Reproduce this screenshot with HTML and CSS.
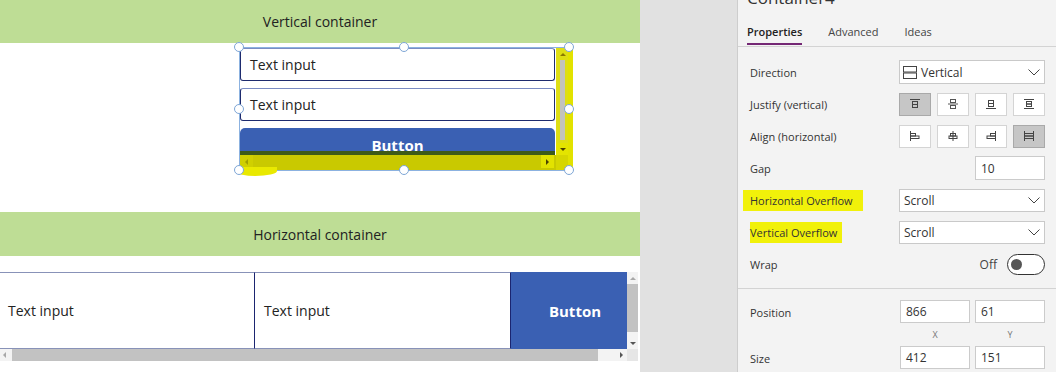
FILE: index.html
```html
<!DOCTYPE html>
<html>
<head>
<meta charset="utf-8">
<link rel="stylesheet" href="styles.css">
</head>
<body>
<div class="app">
  <div class="canvas">
    <div class="band band-top">Vertical container</div>
    <div class="vzone">
      <div class="vcont">
        <div class="vcont-content">
          <div class="vin">Text input</div>
          <div class="vin">Text input</div>
          <div class="vbtn">Button</div>
        </div>
        <div class="vscroll">
          <span class="tri tri-up c-olive"></span>
          <span class="vthumb"></span>
          <span class="vdown"><span class="tri tri-down c-dark"></span></span>
        </div>
        <div class="hscroll">
          <span class="hleft"><span class="tri tri-left c-light"></span></span>
          <span class="hright"><span class="tri tri-right c-dark"></span></span>
        </div>
        <div class="vcorner"></div>
        <span class="hl-right"></span>
        <span class="hl-blob"></span>
        <span class="hd" style="left:-1px;top:-1px"></span>
        <span class="hd" style="left:164px;top:-1px"></span>
        <span class="hd" style="left:329px;top:-1px"></span>
        <span class="hd" style="left:-1px;top:61px"></span>
        <span class="hd" style="left:329px;top:61px"></span>
        <span class="hd" style="left:-1px;top:122px"></span>
        <span class="hd" style="left:164px;top:122px"></span>
        <span class="hd" style="left:329px;top:122px"></span>
      </div>
    </div>
    <div class="band band-mid">Horizontal container</div>
    <div class="hzone">
      <div class="hcont">
        <div class="hcontent">
          <div class="hin hin1">Text input</div>
          <div class="hin hin2">Text input</div>
          <div class="hbtn">Button</div>
        </div>
        <div class="hvs">
          <span class="tri tri-up c-gray"></span>
          <span class="hvthumb"></span>
          <span class="tri tri-down c-mid"></span>
        </div>
        <div class="hhs">
          <span class="tri tri-left c-gray"></span>
          <span class="hhthumb"></span>
          <span class="tri tri-right c-mid"></span>
        </div>
        <div class="hcorner"></div>
      </div>
    </div>
  </div>
  <div class="gutter"></div>
  <div class="panel">
    <div class="ptitle">Container4</div>
    <div class="tabs">
      <span class="tab active">Properties</span>
      <span class="tab">Advanced</span>
      <span class="tab">Ideas</span>
    </div>
    <div class="props">
      <div class="row">
        <span class="lbl">Direction</span>
        <div class="dd">
          <svg class="dir-ic" width="14" height="13" viewBox="0 0 14 13"><rect x="0.5" y="0.5" width="13" height="5.5" fill="none" stroke="#444"/><rect x="0.5" y="7" width="13" height="5.5" fill="none" stroke="#444"/></svg>
          <span>Vertical</span>
          <svg class="chev" width="12" height="7" viewBox="0 0 12 7"><polyline points="0.5,0.5 6,6 11.5,0.5" fill="none" stroke="#444"/></svg>
        </div>
      </div>
      <div class="row">
        <span class="lbl">Justify (vertical)</span>
        <div class="seg">
          <span class="sb sel"><svg width="12" height="12" viewBox="0 0 12 12"><line x1="1" y1="1.5" x2="11" y2="1.5" stroke="#444"/><rect x="3.5" y="3.5" width="5" height="3" fill="none" stroke="#444"/><rect x="3.5" y="6.5" width="5" height="3" fill="none" stroke="#444"/></svg></span>
          <span class="sb"><svg width="12" height="12" viewBox="0 0 12 12"><rect x="3.5" y="1.5" width="5" height="3" fill="none" stroke="#555"/><line x1="1" y1="6" x2="11" y2="6" stroke="#555"/><rect x="3.5" y="7.5" width="5" height="3" fill="none" stroke="#555"/></svg></span>
          <span class="sb"><svg width="12" height="12" viewBox="0 0 12 12"><rect x="3.5" y="2.5" width="5" height="3" fill="none" stroke="#444"/><rect x="3.5" y="5.5" width="5" height="3" fill="none" stroke="#444"/><line x1="1" y1="10.5" x2="11" y2="10.5" stroke="#444"/></svg></span>
          <span class="sb"><svg width="12" height="12" viewBox="0 0 12 12"><line x1="1" y1="1.5" x2="11" y2="1.5" stroke="#444"/><rect x="3.5" y="3.5" width="5" height="2.5" fill="none" stroke="#444"/><rect x="3.5" y="6" width="5" height="2.5" fill="none" stroke="#444"/><line x1="1" y1="10.5" x2="11" y2="10.5" stroke="#444"/></svg></span>
        </div>
      </div>
      <div class="row">
        <span class="lbl">Align (horizontal)</span>
        <div class="seg">
          <span class="sb"><svg width="12" height="12" viewBox="0 0 12 12"><line x1="1.5" y1="1" x2="1.5" y2="11" stroke="#444"/><rect x="1.5" y="3.5" width="5" height="2.5" fill="none" stroke="#444"/><rect x="1.5" y="6" width="8.5" height="2.5" fill="none" stroke="#444"/></svg></span>
          <span class="sb"><svg width="12" height="12" viewBox="0 0 12 12"><line x1="6" y1="1" x2="6" y2="11" stroke="#444"/><rect x="3.5" y="3.5" width="5" height="2.5" fill="none" stroke="#444"/><rect x="2" y="6" width="8" height="2.5" fill="none" stroke="#444"/></svg></span>
          <span class="sb"><svg width="12" height="12" viewBox="0 0 12 12"><line x1="10.5" y1="1" x2="10.5" y2="11" stroke="#444"/><rect x="5.5" y="3.5" width="5" height="2.5" fill="none" stroke="#444"/><rect x="2" y="6" width="8.5" height="2.5" fill="none" stroke="#444"/></svg></span>
          <span class="sb sel"><svg width="12" height="12" viewBox="0 0 12 12"><line x1="1.5" y1="1" x2="1.5" y2="11" stroke="#444"/><line x1="10.5" y1="1" x2="10.5" y2="11" stroke="#444"/><rect x="1.5" y="3.5" width="9" height="2.5" fill="none" stroke="#444"/><rect x="1.5" y="6" width="9" height="2.5" fill="none" stroke="#444"/></svg></span>
        </div>
      </div>
      <div class="row">
        <span class="lbl">Gap</span>
        <div class="num gap">10</div>
      </div>
      <div class="row">
        <span class="lbl"><span class="hl hl-h">Horizontal Overflow</span></span>
        <div class="dd dd-s"><span>Scroll</span><svg class="chev" width="12" height="7" viewBox="0 0 12 7"><polyline points="0.5,0.5 6,6 11.5,0.5" fill="none" stroke="#444"/></svg></div>
      </div>
      <div class="row">
        <span class="lbl"><span class="hl hl-v">Vertical Overflow</span></span>
        <div class="dd dd-s"><span>Scroll</span><svg class="chev" width="12" height="7" viewBox="0 0 12 7"><polyline points="0.5,0.5 6,6 11.5,0.5" fill="none" stroke="#444"/></svg></div>
      </div>
      <div class="row">
        <span class="lbl">Wrap</span>
        <div class="wrapctl"><span class="off">Off</span><span class="tgl"><span class="knob"></span></span></div>
      </div>
    </div>
    <div class="divider"></div>
    <div class="pos">
      <div class="prow">
        <span class="lbl lbl-pos">Position</span>
        <div class="num">866</div>
        <div class="num">61</div>
      </div>
      <div class="prow xy">
        <span></span>
        <span class="axis">X</span>
        <span class="axis">Y</span>
      </div>
      <div class="prow">
        <span class="lbl lbl-pos">Size</span>
        <div class="num">412</div>
        <div class="num">151</div>
      </div>
    </div>
  </div>
</div>
</body>
</html>
```
FILE: styles.css
```css
* { box-sizing: border-box; }
html, body { margin: 0; padding: 0; }
body {
  width: 1056px;
  height: 372px;
  overflow: hidden;
  background: #fff;
  font-family: "Open Sans", "Noto Sans", sans-serif;
}
.app { display: flex; width: 1056px; height: 372px; }

/* ---------- canvas ---------- */
.canvas {
  width: 640px;
  flex: none;
  background: #fff;
  display: flex;
  flex-direction: column;
}
.band {
  background: #bedd95;
  color: #222;
  font-size: 14px;
  display: flex;
  align-items: center;
  justify-content: center;
}
.band-top { height: 43px; }
.band-mid { height: 44px; }

.vzone { height: 169px; padding: 5px 0 0 240px; }
.vcont {
  position: relative;
  width: 329px;
  height: 122px;
  outline: 1px solid #8cb2e0;
  display: grid;
  grid-template-columns: 316px 13px;
  grid-template-rows: 107px 15px;
}
.vcont-content {
  overflow: hidden;
  display: flex;
  flex-direction: column;
  gap: 7px;
}
.vin {
  flex: none;
  width: 315px;
  height: 33px;
  background: #fff;
  border: 1px solid #1e2b6e;
  border-top-color: #7a8cc4;
  border-radius: 3px;
  color: #222;
  font-size: 14px;
  padding-left: 9px;
  display: flex;
  align-items: center;
}
.vbtn {
  flex: none;
  width: 315px;
  height: 33px;
  border-radius: 5px;
  background: linear-gradient(#3a60b3 0 23px, #3d5a18 23px);
  color: #fff;
  font-weight: 700;
  font-size: 15px;
  display: flex;
  align-items: center;
  justify-content: center;
}
.vscroll {
  background: #dede14;
  display: flex;
  flex-direction: column;
  align-items: center;
  padding-top: 5px;
}
.vthumb {
  width: 5px;
  height: 80px;
  margin: 4px 0 0 -1px;
  background: #c3c3bc;
}
.vdown {
  margin-top: auto;
  width: 13px;
  height: 12px;
  background: #e4e400;
  display: flex;
  align-items: center;
  justify-content: center;
}
.hscroll {
  background: #c9c900;
  display: flex;
  align-items: stretch;
  justify-content: space-between;
  padding: 0 2px 2px 0;
}
.hleft, .hright {
  width: 13px;
  display: flex;
  align-items: center;
  justify-content: center;
}
.hleft { background: #d0d000; }
.hright { background: #e2e200; }
.vcorner { background: #d6d600; }

.hl-right {
  position: absolute;
  left: 328px;
  top: -3px;
  width: 5px;
  height: 126px;
  background: #e2e200;
}
.hl-blob {
  position: absolute;
  left: -3px;
  top: 119px;
  width: 40px;
  height: 9px;
  background: #e9e900;
  border-radius: 0 0 60% 50%;
}
.hd {
  position: absolute;
  width: 10px;
  height: 10px;
  border-radius: 50%;
  background: #fff;
  border: 1px solid #7ea6d6;
  transform: translate(-50%, -50%);
}

/* triangles (drawn in currentColor) */
.tri { width: 0; height: 0; display: block; flex: none; }
.tri-up { border-left: 3px solid transparent; border-right: 3px solid transparent; border-bottom: 3px solid currentColor; }
.tri-down { border-left: 3px solid transparent; border-right: 3px solid transparent; border-top: 3px solid currentColor; }
.tri-left { border-top: 3px solid transparent; border-bottom: 3px solid transparent; border-right: 3px solid currentColor; }
.tri-right { border-top: 3px solid transparent; border-bottom: 3px solid transparent; border-left: 3px solid currentColor; }
.c-olive { color: #8a7a00; }
.c-dark { color: #4a4200; }
.c-light { color: #a0a000; }
.c-gray { color: #a8a8a8; }
.c-mid { color: #555; }

.hzone { padding-top: 16px; }
.hcont {
  width: 638px;
  height: 89px;
  display: grid;
  grid-template-columns: 627px 11px;
  grid-template-rows: 77px 12px;
}
.hcontent { display: flex; overflow: hidden; }
.hin {
  flex: none;
  height: 77px;
  background: #fff;
  border-top: 1px solid #8892b8;
  border-bottom: 1px solid #8892b8;
  color: #222;
  font-size: 14px;
  display: flex;
  align-items: center;
}
.hin1 { width: 255px; border-right: 1px solid #1b2570; padding-left: 8px; }
.hin2 { width: 256px; border-right: 1px solid #1b2570; padding-left: 9px; }
.hbtn {
  flex: none;
  width: 128px;
  background: #3a60b3;
  color: #fff;
  font-weight: 700;
  font-size: 15px;
  display: flex;
  align-items: center;
  justify-content: center;
}
.hvs {
  background: #f3f3f3;
  display: flex;
  flex-direction: column;
  align-items: center;
  padding: 5px 0 4px;
}
.hvthumb { width: 11px; height: 48px; background: #c2c2c2; margin: 4px 0 auto; }
.hhs {
  background: #f3f3f3;
  display: flex;
  align-items: center;
  padding: 0 4px 0 3px;
}
.hhthumb { height: 12px; width: 586px; background: #c2c2c2; margin: 0 auto 0 6px; }
.hcorner { background: #e6e6e6; }

/* ---------- gutter & panel ---------- */
.gutter { width: 97px; flex: none; background: #e1e1e1; }
.panel {
  width: 319px;
  flex: none;
  background: #f3f3f3;
  border-left: 1px solid #cdcdcd;
  color: #333;
}
.ptitle {
  font-size: 17px;
  line-height: 20px;
  height: 20px;
  margin: -12px 0 0 9px;
  color: #333;
}
.tabs {
  display: flex;
  gap: 26px;
  height: 39px;
  padding-left: 9px;
  border-bottom: 1px solid #d3d3d3;
}
.tab {
  position: relative;
  font-size: 11px;
  line-height: 15px;
  padding-top: 16px;
  color: #444;
}
.tab.active { font-weight: 600; color: #222; }
.tab.active::after {
  content: "";
  position: absolute;
  left: 0;
  right: 0;
  bottom: 1px;
  height: 2px;
  background: #742774;
}
.props { padding: 9px 11px 0 12px; }
.row {
  height: 32px;
  display: grid;
  grid-template-columns: 1fr 146px;
  align-items: center;
}
.lbl { font-size: 11px; color: #333; white-space: nowrap; }
.lbl-pos { padding-top: 2px; }
.hl { background: #f1f10a; padding: 3px 0; }
.hl-h { margin-left: -7px; padding-left: 7px; padding-right: 10px; }
.hl-v { padding-right: 5px; }
.dd {
  height: 24px;
  background: #fff;
  border: 1px solid #c9c9c9;
  display: flex;
  align-items: center;
  gap: 4px;
  padding: 0 4px 0 3px;
  font-size: 12px;
  color: #333;
}
.dd-s { height: 23px; padding-left: 4px; }
.chev { margin-left: auto; }
.seg {
  display: grid;
  grid-template-columns: repeat(4, 32px);
  justify-content: space-between;
}
.sb {
  height: 23px;
  background: #fff;
  border: 1px solid #d4d4d4;
  display: flex;
  align-items: center;
  justify-content: center;
}
.sb.sel { background: #c6c6c6; border-color: #a9a9a9; }
.num {
  height: 23px;
  background: #fff;
  border: 1px solid #cbcbcb;
  font-size: 12px;
  color: #333;
  padding-left: 5px;
  display: flex;
  align-items: center;
}
.gap { width: 70px; justify-self: end; height: 24px; }
.wrapctl {
  justify-self: end;
  display: flex;
  align-items: center;
  gap: 10px;
}
.off { font-size: 12px; color: #444; }
.tgl {
  width: 38px;
  height: 21px;
  border: 1.5px solid #333;
  border-radius: 11px;
  display: flex;
  align-items: center;
  padding-left: 3px;
  background: #fff;
}
.knob { width: 11px; height: 11px; border-radius: 50%; background: #555; }
.divider { margin-top: 8px; border-top: 1px solid #d3d3d3; }
.pos { padding: 11px 11px 0 12px; }
.prow {
  display: grid;
  grid-template-columns: 1fr 70px 70px;
  column-gap: 5px;
  align-items: center;
  height: 23px;
}
.xy { height: 23px; }
.axis { font-size: 9px; color: #777; text-align: center; }
```
